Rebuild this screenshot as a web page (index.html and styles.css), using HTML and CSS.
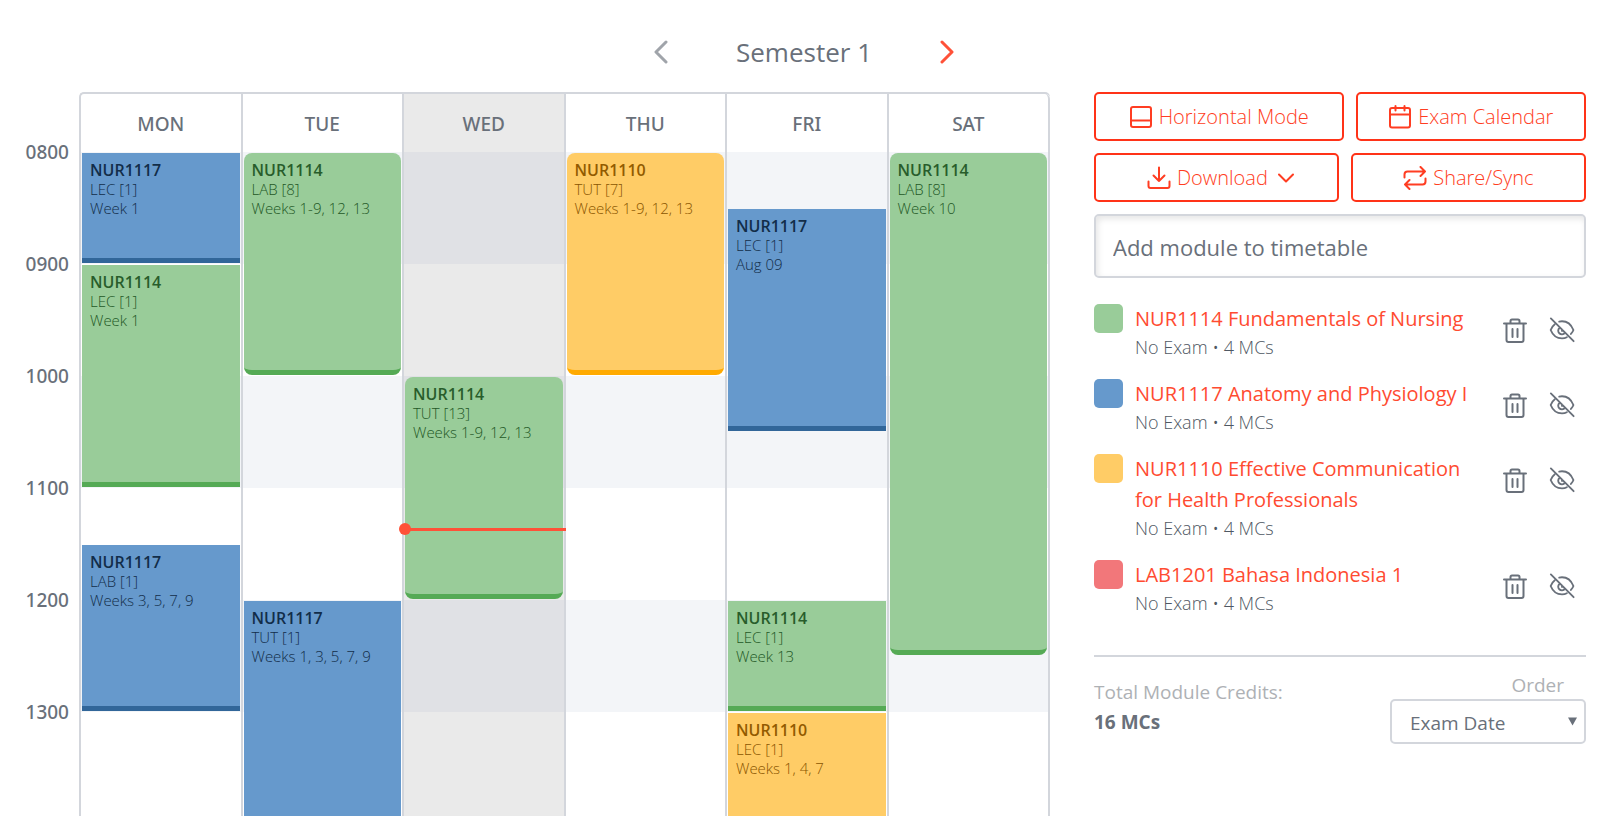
FILE: index.html
```html
<!DOCTYPE html>
<html lang="en">
<head>
<meta charset="utf-8">
<title>Timetable - Semester 1</title>
<link rel="stylesheet" href="styles.css">
</head>
<body>
<svg class="sprite" aria-hidden="true">
  <symbol id="icon-trash" viewBox="0 0 26 28"><path d="M2 7.500h22M4.500 8v16a2 2 0 0 0 2 2h13a2 2 0 0 0 2-2V8M8.500 7V5A1.500 1.500 0 0 1 10 3.500h6A1.500 1.500 0 0 1 17.500 5v2M10.500 13v8M15.500 13v8"/></symbol>
  <symbol id="icon-eye-off" viewBox="0 0 28 28"><path d="M2 1.500l24.500 24.500M6 8C4 9.500 2.600 11.500 1.800 14 4 19.500 8.500 23 14 23c2 0 3.700-.4 5.200-1.200M11 5c1-.3 2-.4 3-.4 5.500 0 10 3.700 12.300 9.400-.6 1.600-1.500 3-2.700 4.300M11.500 11.500a4 4 0 1 0 5.600 5.600M14 13.500v1.500"/></symbol>
</svg>
<div class="page">
  <header class="semester">
    <button class="semester-nav" type="button" aria-label="Previous semester" disabled><svg class="icon chevron" viewBox="0 0 24 24"><path d="M17 2 7 12l10 10"/></svg></button>
    <h1 class="semester-title">Semester 1</h1>
    <button class="semester-nav" type="button" aria-label="Next semester"><svg class="icon chevron" viewBox="0 0 24 24"><path d="M7 2l10 10L7 22"/></svg></button>
  </header>
  <div class="content">
    <main class="timetable">
      <ol class="hours"><li>0800</li><li>0900</li><li>1000</li><li>1100</li><li>1200</li><li>1300</li></ol>
      <div class="days">
        <section class="day">
          <h2 class="day-name">MON</h2>
          <div class="slots">
            <article class="lesson blue row-1 span-2"><h3>NUR1117</h3><p>LEC [1]</p><p>Week 1</p></article>
            <article class="lesson green row-3 span-4"><h3>NUR1114</h3><p>LEC [1]</p><p>Week 1</p></article>
            <article class="lesson blue row-8 span-3"><h3>NUR1117</h3><p>LAB [1]</p><p>Weeks 3, 5, 7, 9</p></article>
          </div>
        </section>
        <section class="day">
          <h2 class="day-name">TUE</h2>
          <div class="slots">
            <article class="lesson green movable row-1 span-4"><h3>NUR1114</h3><p>LAB [8]</p><p>Weeks 1-9, 12, 13</p></article>
            <article class="lesson blue row-9 span-4"><h3>NUR1117</h3><p>TUT [1]</p><p>Weeks 1, 3, 5, 7, 9</p></article>
          </div>
        </section>
        <section class="day today">
          <h2 class="day-name">WED</h2>
          <div class="slots">
            <article class="lesson green movable row-5 span-4"><h3>NUR1114</h3><p>TUT [13]</p><p>Weeks 1-9, 12, 13</p></article>
            <div class="now" style="top: 48%"></div>
          </div>
        </section>
        <section class="day">
          <h2 class="day-name">THU</h2>
          <div class="slots">
            <article class="lesson yellow movable row-1 span-4"><h3>NUR1110</h3><p>TUT [7]</p><p>Weeks 1-9, 12, 13</p></article>
          </div>
        </section>
        <section class="day">
          <h2 class="day-name">FRI</h2>
          <div class="slots">
            <article class="lesson blue row-2 span-4"><h3>NUR1117</h3><p>LEC [1]</p><p>Aug 09</p></article>
            <article class="lesson green row-9 span-2"><h3>NUR1114</h3><p>LEC [1]</p><p>Week 13</p></article>
            <article class="lesson yellow row-11 span-4"><h3>NUR1110</h3><p>LEC [1]</p><p>Weeks 1, 4, 7</p></article>
          </div>
        </section>
        <section class="day">
          <h2 class="day-name">SAT</h2>
          <div class="slots">
            <article class="lesson green movable row-1 span-9"><h3>NUR1114</h3><p>LAB [8]</p><p>Week 10</p></article>
          </div>
        </section>
      </div>
    </main>
    <aside class="sidebar">
      <div class="actions">
        <div class="action-row">
          <button class="action wide" type="button"><svg class="icon" viewBox="0 0 24 24"><rect x="2" y="2" width="20" height="20" rx="2"/><path d="M2 15.500h20"/></svg>Horizontal Mode</button>
          <button class="action" type="button"><svg class="icon" viewBox="0 0 24 24"><rect x="2" y="3" width="20" height="19.500" rx="2"/><path d="M2 9.500h20M7.500 1v4.500M16.500 1v4.500"/></svg>Exam Calendar</button>
        </div>
        <div class="action-row">
          <button class="action mid" type="button"><svg class="icon" viewBox="0 0 24 24"><path d="M1.500 15.500V20a2 2 0 0 0 2 2h17a2 2 0 0 0 2-2v-4.500M6.500 9.500l5.500 5.500 5.500-5.500M12 1.500V15"/></svg>Download<svg class="icon caret" viewBox="4 0 16 24"><path d="M5 8.500l7 7 7-7"/></svg></button>
          <button class="action" type="button"><svg class="icon" viewBox="0 0 24 24"><path d="M17.500 1 22 5.500 17.500 10M1.500 11.500v-3a3 3 0 0 1 3-3H22M6.500 23 2 18.500 6.500 14M22.500 12.500v3a3 3 0 0 1-3 3H2"/></svg>Share/Sync</button>
        </div>
      </div>
      <input class="search" type="text" placeholder="Add module to timetable" aria-label="Add module to timetable">
      <ul class="modules">
        <li class="module">
          <button class="swatch green" type="button" aria-label="Change NUR1114 colour"></button>
          <div class="module-text"><a href="#nur1114">NUR1114 Fundamentals of Nursing</a><p>No Exam • 4 MCs</p></div>
          <button class="tool" type="button" aria-label="Remove NUR1114"><svg class="icon trash"><use href="#icon-trash"/></svg></button>
          <button class="tool" type="button" aria-label="Hide NUR1114"><svg class="icon eye"><use href="#icon-eye-off"/></svg></button>
        </li>
        <li class="module">
          <button class="swatch blue" type="button" aria-label="Change NUR1117 colour"></button>
          <div class="module-text"><a href="#nur1117">NUR1117 Anatomy and Physiology I</a><p>No Exam • 4 MCs</p></div>
          <button class="tool" type="button" aria-label="Remove NUR1117"><svg class="icon trash"><use href="#icon-trash"/></svg></button>
          <button class="tool" type="button" aria-label="Hide NUR1117"><svg class="icon eye"><use href="#icon-eye-off"/></svg></button>
        </li>
        <li class="module">
          <button class="swatch yellow" type="button" aria-label="Change NUR1110 colour"></button>
          <div class="module-text"><a href="#nur1110">NUR1110 Effective Communication for Health Professionals</a><p>No Exam • 4 MCs</p></div>
          <button class="tool" type="button" aria-label="Remove NUR1110"><svg class="icon trash"><use href="#icon-trash"/></svg></button>
          <button class="tool" type="button" aria-label="Hide NUR1110"><svg class="icon eye"><use href="#icon-eye-off"/></svg></button>
        </li>
        <li class="module">
          <button class="swatch red" type="button" aria-label="Change LAB1201 colour"></button>
          <div class="module-text"><a href="#lab1201">LAB1201 Bahasa Indonesia 1</a><p>No Exam • 4 MCs</p></div>
          <button class="tool" type="button" aria-label="Remove LAB1201"><svg class="icon trash"><use href="#icon-trash"/></svg></button>
          <button class="tool" type="button" aria-label="Hide LAB1201"><svg class="icon eye"><use href="#icon-eye-off"/></svg></button>
        </li>
      </ul>
      <footer class="summary">
        <p class="credits">Total Module Credits:<strong>16 MCs</strong></p>
        <div class="order">
          <label for="order">Order</label>
          <div class="select-wrap">
            <select id="order"><option>Exam Date</option><option>Module Code</option></select>
            <svg class="select-arrow" viewBox="0 0 10 10"><path d="M0 1h10L5 10z"/></svg>
          </div>
        </div>
      </footer>
    </aside>
  </div>
</div>
</body>
</html>
```
FILE: styles.css
```css
* { box-sizing: border-box; margin: 0; padding: 0; }

:root {
  --accent: #ff5138;
  --text: #69707a;
  --muted: #aeb1b5;
  --line: #d3d6dc;
  --stripe: #f3f5f8;
  --slot: 56px;
}

body {
  font-family: "Open Sans", "Noto Sans", sans-serif;
  font-size: 19px;
  color: var(--text);
  background: #fff;
}

button, input, select { font: inherit; color: inherit; }
button { border: 0; background: none; cursor: pointer; }
ul, ol { list-style: none; }

.sprite { position: absolute; width: 0; height: 0; }

.icon {
  width: 24px;
  height: 24px;
  flex: none;
  fill: none;
  stroke: currentColor;
  stroke-width: 2;
  stroke-linecap: round;
  stroke-linejoin: round;
}

.page {
  height: 100vh;
  overflow: hidden;
  padding: 0 14px 0 22px;
}

.semester {
  display: flex;
  align-items: center;
  justify-content: center;
  gap: 63px;
  height: 92px;
  padding-top: 12px;
}

.semester-nav { display: flex; padding: 0; color: var(--accent); }
.semester-nav:disabled { color: #a0a4aa; cursor: default; }
.chevron { stroke-width: 3; }
.semester-title { font-size: 26px; font-weight: 400; line-height: 30px; }

.content { display: flex; align-items: flex-start; gap: 44px; }

.timetable { display: flex; flex: 1028 1 0; min-width: 0; }

.hours {
  flex: none;
  width: 57px;
  padding: 45px 10px 0 0;
  text-align: right;
  font-family: "Noto Sans", sans-serif;
  font-weight: 500;
}
.hours li { height: calc(var(--slot) * 2); line-height: 30px; }

.days {
  flex: 1;
  display: grid;
  grid-template-columns: repeat(6, 1fr);
  border: 2px solid var(--line);
  border-right: 0;
  border-radius: 5px;
}

.day { min-width: 0; border-right: 2px solid var(--line); }
.day:last-child { border-top-right-radius: 5px; }

.day-name {
  height: 58px;
  line-height: 60px;
  text-align: center;
  font-family: "Noto Sans", sans-serif;
  font-size: 19px;
  font-weight: 500;
}

.slots {
  position: relative;
  display: grid;
  grid-template-rows: repeat(14, var(--slot));
  background: repeating-linear-gradient(var(--stripe) 0 112px, transparent 112px 224px);
}

.today { background: #eaeaea; --stripe: #e0e1e5; }

.lesson {
  margin: 1px;
  padding: 7px 8px;
  border-bottom: 5px solid;
  font-size: 15px;
  font-weight: 300;
  line-height: 19px;
  overflow: hidden;
}
.lesson h3 { font-size: 16px; font-weight: 600; line-height: 20px; }
.movable { border-radius: 8px; }

.lesson.green { color: #235826; border-color: #55aa55; }
.lesson.blue { color: #122d49; border-color: #316699; }
.lesson.yellow { color: #8a5500; border-color: #ffaa00; }
.lesson.green h3 { color: #285d2b; }
.lesson.yellow h3 { color: #925b00; }

.green { background: #99cc99; }
.blue { background: #6699cc; }
.yellow { background: #ffcc66; }
.red { background: #f2777a; }

.row-1 { grid-row-start: 1; }
.row-2 { grid-row-start: 2; }
.row-3 { grid-row-start: 3; }
.row-5 { grid-row-start: 5; }
.row-8 { grid-row-start: 8; }
.row-9 { grid-row-start: 9; }
.row-11 { grid-row-start: 11; }
.span-2 { grid-row-end: span 2; }
.span-3 { grid-row-end: span 3; }
.span-4 { grid-row-end: span 4; }
.span-9 { grid-row-end: span 9; }

.now {
  position: absolute;
  left: 0;
  right: -2px;
  height: 3px;
  background: var(--accent);
}
.now::before {
  content: "";
  position: absolute;
  top: -5px;
  left: -5px;
  width: 12px;
  height: 12px;
  border-radius: 50%;
  background: var(--accent);
}

.sidebar { flex: 492 1 0; min-width: 0; }

.actions { display: grid; gap: 12px; }
.action-row { display: flex; gap: 12px; }
.action {
  display: flex;
  flex: 46 1 0;
  align-items: center;
  justify-content: center;
  gap: 6px;
  height: 49px;
  padding: 0 4px;
  border: 2px solid #ff3318;
  border-radius: 5px;
  color: #ff3d22;
  font-weight: 300;
  font-size: 20px;
  white-space: nowrap;
}
.action.wide { flex-grow: 50; }
.action.mid { flex-grow: 48; padding: 0 0 0 8px; }
.caret { width: 16px; margin-left: 4px; }

.search {
  display: block;
  width: 100%;
  height: 64px;
  margin-top: 12px;
  padding: 2px 17px 0;
  border: 2px solid var(--line);
  border-radius: 5px;
  box-shadow: inset 2px 3px 6px rgba(0, 0, 0, .1);
  font-size: 22px;
}
.search::placeholder { color: var(--text); opacity: 1; }

.modules { margin-top: 25px; }
.module { display: flex; align-items: flex-start; padding: 0 1px 18px 0; }
.swatch { flex: none; width: 29px; height: 29px; margin-top: 1px; border-radius: 5px; }
.module-text { flex: 1; min-width: 0; margin-left: 12px; line-height: 26px; font-size: 18px; font-weight: 300; }
.module-text a { display: block; color: #ff4b31; text-decoration: none; font-size: 20px; font-weight: 400; line-height: 31px; }
.module-text p { color: #4f5863; }
.tool { display: flex; flex: none; justify-content: center; align-items: center; width: 47px; height: 54px; }
.tool .icon { width: 26px; height: 28px; }

.summary {
  display: flex;
  justify-content: space-between;
  margin-top: 21px;
  padding-top: 14px;
  border-top: 2px solid var(--line);
}
.credits { padding-top: 6px; line-height: 30px; color: var(--muted); }
.credits strong { display: block; color: var(--text); }
.order { width: 196px; color: var(--muted); }
.order label { display: block; padding-right: 22px; line-height: 28px; text-align: right; }
.select-wrap { position: relative; color: var(--text); }
.order select {
  width: 100%;
  height: 45px;
  padding: 2px 18px 0;
  border: 2px solid var(--line);
  border-radius: 5px;
  background: #fff;
  appearance: none;
}
.select-arrow { position: absolute; top: 17px; right: 9px; width: 9px; height: 10px; fill: var(--text); pointer-events: none; }
```
